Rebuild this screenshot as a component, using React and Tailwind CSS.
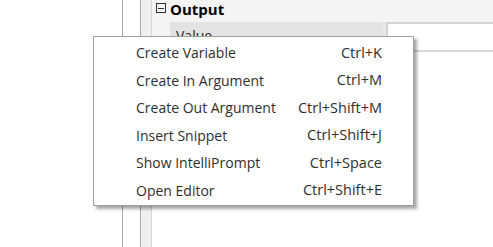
const items = [
  { label: "Create Variable", keys: "Ctrl+K" },
  { label: "Create In Argument", keys: "Ctrl+M" },
  { label: "Create Out Argument", keys: "Ctrl+Shift+M" },
  { label: "Insert Snippet", keys: "Ctrl+Shift+J" },
  { label: "Show IntelliPrompt", keys: "Ctrl+Space" },
  { label: "Open Editor", keys: "Ctrl+Shift+E" },
];

export default function App() {
  return (
    <div
      className="relative w-[493px] h-[247px] overflow-hidden bg-white flex"
      style={{ fontFamily: '"Open Sans", "Noto Sans", sans-serif' }}
    >
      {/* left panes */}
      <div className="w-[122px] shrink-0 bg-white" />
      <div className="w-[18px] shrink-0 bg-white border-l border-[#a9a9a9]" />
      <div className="w-[12px] shrink-0 bg-[#f0f0f0] border-l border-[#a9a9a9] border-r border-r-[#d6d6d6]" />

      {/* property grid */}
      <div className="flex-1 flex flex-col">
        <div className="h-[22px] bg-[#f4f4f4] flex items-start pt-[2px] pl-[4px] gap-[4px]">
          <div className="mt-[1px] w-[10px] h-[10px] border border-[#333] flex items-center justify-center">
            <div className="w-[6px] h-px bg-[#333]" />
          </div>
          <span className="text-[15px] font-bold text-black leading-[14px]">Output</span>
        </div>
        <div className="h-[28px] flex bg-[#f4f4f4]">
          <div className="w-[18px] shrink-0" />
          <div className="w-[213px] shrink-0 bg-[#e3e3e3] pl-[6px] pt-[7px] text-[14px] text-[#222] leading-none">
            Value
          </div>
          <div className="w-[3px] shrink-0 bg-[#e8e8e8]" />
          <div className="flex-1 bg-white border-t-2 border-l-2 border-[#d4d4d4]" />
        </div>
        <div className="h-[2px] bg-[#d8d8d8] ml-[18px]" />
        <div className="flex-1 bg-white" />
      </div>

      {/* context menu */}
      <div className="absolute left-[93px] top-[36px] w-[321px] h-[170px] bg-white border border-[#a0a0a0] shadow-[3px_3px_3px_rgba(0,0,0,0.35)] pt-[2px]">
        {items.map((it) => (
          <div
            key={it.label}
            className="h-[27.5px] flex items-center justify-between pl-[42px] pr-[31px] text-[14px] text-[#2e2e2e]"
          >
            <span>{it.label}</span>
            <span className="text-[14.5px]">{it.keys}</span>
          </div>
        ))}
      </div>
    </div>
  );
}
